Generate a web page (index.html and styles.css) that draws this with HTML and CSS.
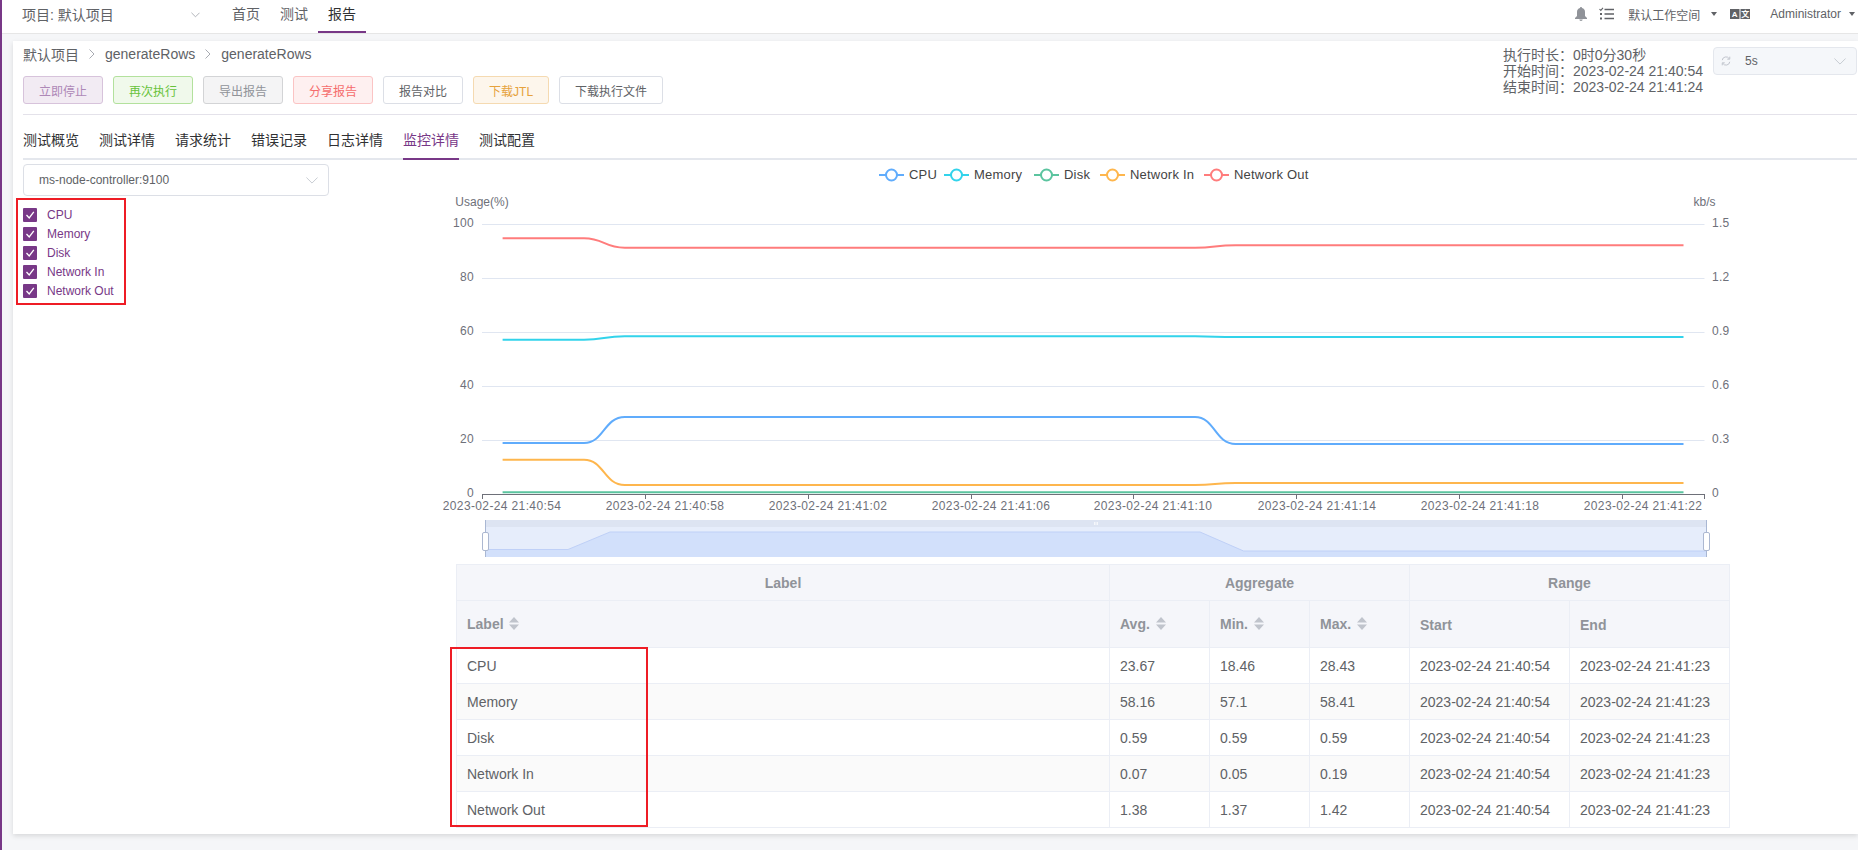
FILE: index.html
```html
<!DOCTYPE html>
<html lang="zh">
<head>
<meta charset="utf-8">
<title>Report</title>
<link rel="stylesheet" href="styles.css">
</head>
<body>
<div class="app">
  <header class="topbar">
    <div class="project"><span>项目: 默认项目</span>
      <svg class="chev" viewBox="0 0 10 6" width="9" height="6"><path d="M.5.5 5 5 9.500.5" fill="none" stroke="#a8abb2"/></svg>
    </div>
    <nav class="nav">
      <a class="nav-item">首页</a><a class="nav-item">测试</a><a class="nav-item active">报告</a>
    </nav>
    <div class="top-right">
      <svg class="i-bell" viewBox="0 0 12 14" width="12" height="14"><path d="M6 0c.7 0 1 .5 1 1 2 .5 3 2 3 4v4l2 2v1H0v-1l2-2V5c0-2 1-3.500 3-4 0-.5.3-1 1-1zM4.300 12.600h3.400C7.600 13.500 7 14 6 14s-1.600-.5-1.700-1.400z" fill="#909399"/></svg>
      <svg class="i-list" viewBox="0 0 15 14" width="15" height="14"><path d="M5.500 2.500H15M5.500 7H15M5.500 11.500H15" stroke="#606266" stroke-width="1.400"/><path d="M.5 2 1.800 3.400 4 .8" fill="none" stroke="#606266" stroke-width="1.100"/><rect x="1" y="6" width="2" height="2" fill="#606266"/><rect x="1" y="10.500" width="2" height="2" fill="#606266"/></svg>
      <span class="ws">默认工作空间</span><i class="caret"></i>
      <svg class="i-lang" viewBox="0 0 20 10" width="20" height="10"><rect width="9.500" height="10" fill="#606266"/><rect x="10.500" width="9.500" height="10" fill="#606266"/><text x="4.700" y="8" text-anchor="middle" class="lang-txt">A</text><text x="15.200" y="8" text-anchor="middle" class="lang-txt">文</text></svg>
      <span class="user">Administrator</span><i class="caret"></i>
    </div>
  </header>

  <main class="card">
    <section class="head">
      <div class="head-left">
        <div class="crumbs">
          <span>默认项目</span>
          <svg class="sep" viewBox="0 0 6 10" width="6" height="10"><path d="M.5.5 5 5 .5 9.500" fill="none" stroke="#a8abb2"/></svg>
          <span>generateRows</span>
          <svg class="sep" viewBox="0 0 6 10" width="6" height="10"><path d="M.5.5 5 5 .5 9.500" fill="none" stroke="#a8abb2"/></svg>
          <span>generateRows</span>
        </div>
        <div class="actions">
          <button class="btn b-purple">立即停止</button>
          <button class="btn b-green">再次执行</button>
          <button class="btn b-grey">导出报告</button>
          <button class="btn b-red">分享报告</button>
          <button class="btn">报告对比</button>
          <button class="btn b-orange">下载JTL</button>
          <button class="btn">下载执行文件</button>
        </div>
      </div>
      <div class="head-right">
        <div class="times">
          <div>执行时长：0时0分30秒</div>
          <div>开始时间：2023-02-24 21:40:54</div>
          <div>结束时间：2023-02-24 21:41:24</div>
        </div>
        <div class="refresh">
          <svg viewBox="0 0 12 12" width="10" height="10"><path d="M1.500 5A4.500 4.500 0 0 1 9.800 3.200M10.500 7A4.500 4.500 0 0 1 2.200 8.800" fill="none" stroke="#c0c4cc" stroke-width="1.200"/><path d="M10.500.8v3H7.500M1.500 11.200v-3h3" fill="none" stroke="#c0c4cc" stroke-width="1.200"/></svg>
          <span class="refresh-val">5s</span>
          <svg class="refresh-chev" viewBox="0 0 14 8" width="12" height="7"><path d="M.5.5 7 7 13.500.5" fill="none" stroke="#c0c4cc"/></svg>
        </div>
      </div>
    </section>

    <nav class="tabs">
      <a class="tab">测试概览</a><a class="tab">测试详情</a><a class="tab">请求统计</a><a class="tab">错误记录</a><a class="tab">日志详情</a><a class="tab active">监控详情</a><a class="tab">测试配置</a>
    </nav>

    <section class="monitor">
      <aside class="side">
        <div class="select">
          <span>ms-node-controller:9100</span>
          <svg viewBox="0 0 14 8" width="12" height="7"><path d="M.5.5 7 7 13.500.5" fill="none" stroke="#c0c4cc"/></svg>
        </div>
        <ul class="checks">
          <li class="check"><svg class="box" viewBox="0 0 14 14" width="14" height="14"><rect width="14" height="14" rx="1" fill="#783887"/><path d="M3.500 7 6.200 10 10.800 3.800" fill="none" stroke="#fff" stroke-width="1.300"/></svg>CPU</li>
          <li class="check"><svg class="box" viewBox="0 0 14 14" width="14" height="14"><rect width="14" height="14" rx="1" fill="#783887"/><path d="M3.500 7 6.200 10 10.800 3.800" fill="none" stroke="#fff" stroke-width="1.300"/></svg>Memory</li>
          <li class="check"><svg class="box" viewBox="0 0 14 14" width="14" height="14"><rect width="14" height="14" rx="1" fill="#783887"/><path d="M3.500 7 6.200 10 10.800 3.800" fill="none" stroke="#fff" stroke-width="1.300"/></svg>Disk</li>
          <li class="check"><svg class="box" viewBox="0 0 14 14" width="14" height="14"><rect width="14" height="14" rx="1" fill="#783887"/><path d="M3.500 7 6.200 10 10.800 3.800" fill="none" stroke="#fff" stroke-width="1.300"/></svg>Network In</li>
          <li class="check"><svg class="box" viewBox="0 0 14 14" width="14" height="14"><rect width="14" height="14" rx="1" fill="#783887"/><path d="M3.500 7 6.200 10 10.800 3.800" fill="none" stroke="#fff" stroke-width="1.300"/></svg>Network Out</li>
        </ul>
        <div class="mark mark-checks"></div>
      </aside>

      <div class="content">
        <svg class="chart" viewBox="440 165 1320 395" width="1320" height="395">
          <g class="legend">
            <g fill="#fff" stroke-width="2">
              <g stroke="#60acfc"><path d="M879 175H904"/><circle cx="891.500" cy="175" r="5.500"/></g>
              <g stroke="#32d3eb"><path d="M944 175H969"/><circle cx="956.500" cy="175" r="5.500"/></g>
              <g stroke="#5bc49f"><path d="M1034 175H1059"/><circle cx="1046.500" cy="175" r="5.500"/></g>
              <g stroke="#feb64d"><path d="M1100 175H1125"/><circle cx="1112.500" cy="175" r="5.500"/></g>
              <g stroke="#ff7c7c"><path d="M1204 175H1229"/><circle cx="1216.500" cy="175" r="5.500"/></g>
            </g>
            <text x="909" y="179">CPU</text>
            <text x="974" y="179">Memory</text>
            <text x="1064" y="179">Disk</text>
            <text x="1130" y="179">Network In</text>
            <text x="1234" y="179">Network Out</text>
          </g>
          <g stroke="#e0e6f1">
            <path d="M482 224.500H1704.500M482 278.500H1704.500M482 332.500H1704.500M482 386.500H1704.500M482 440.500H1704.500"/>
          </g>
          <path d="M482 494.500H1704.500M482.500 494v5M645.500 494v5M808.500 494v5M971.500 494v5M1133.500 494v5M1296.500 494v5M1459.500 494v5M1622.500 494v5M1704.500 494v5" stroke="#6e7079"/>
          <g class="axis">
            <text x="482" y="206" text-anchor="middle">Usage(%)</text>
            <text x="1704.500" y="206" text-anchor="middle">kb/s</text>
            <g text-anchor="end" class="ticks">
              <text x="474" y="227">100</text><text x="474" y="281">80</text><text x="474" y="335">60</text><text x="474" y="389">40</text><text x="474" y="443">20</text><text x="474" y="497">0</text>
            </g>
            <g class="ticks">
              <text x="1712" y="227">1.5</text><text x="1712" y="281">1.2</text><text x="1712" y="335">0.9</text><text x="1712" y="389">0.6</text><text x="1712" y="443">0.3</text><text x="1712" y="497">0</text>
            </g>
            <g text-anchor="middle" class="dates">
              <text x="502" y="510">2023-02-24 21:40:54</text><text x="665" y="510">2023-02-24 21:40:58</text><text x="828" y="510">2023-02-24 21:41:02</text><text x="991" y="510">2023-02-24 21:41:06</text><text x="1153" y="510">2023-02-24 21:41:10</text><text x="1317" y="510">2023-02-24 21:41:14</text><text x="1480" y="510">2023-02-24 21:41:18</text><text x="1643" y="510">2023-02-24 21:41:22</text>
            </g>
          </g>
          <g fill="none" stroke-width="2">
            <path stroke="#ff7c7c" d="M502.600 238.300H584C604 238.300 604 247.700 624.800 247.700H1195C1215 247.700 1215 245.300 1235.600 245.300H1683.500"/>
            <path stroke="#32d3eb" d="M502.600 339.700H584C604 339.700 604 336.300 624.800 336.300H1195C1215 336.300 1215 337 1235.600 337H1683.500"/>
            <path stroke="#60acfc" d="M502.600 443H584C604 443 604 417 624.800 417H1195C1215 417 1215 444 1235.600 444H1683.500"/>
            <path stroke="#feb64d" d="M502.600 459.700H584C604 459.700 604 485 624.800 485H1195C1215 485 1215 483 1235.600 483H1683.500"/>
            <path stroke="#5bc49f" d="M502.600 492.300H1683.500"/>
          </g>
          <rect x="485" y="520" width="1222" height="37" fill="#e6edfb"/>
          <rect x="485" y="520" width="1222" height="7" fill="#dde4f2"/>
          <path d="M485 549.500H568L610 532H1200L1243.600 551H1707V557H485Z" fill="#d2e0fb"/>
          <path d="M485 549.500H568L610 532H1200L1243.600 551H1707" fill="none" stroke="#bfd0f7"/>
          <path d="M485.500 520V557M1706.500 520V557" stroke="#a9b7d3"/>
          <path d="M1094.500 522v3M1096 522v3M1097.500 522v3" stroke="#fff" stroke-width=".7"/>
          <rect x="482.500" y="532.500" width="6" height="18" rx="1.500" fill="#fff" stroke="#acb8d1"/>
          <rect x="1703.500" y="532.500" width="6" height="18" rx="1.500" fill="#fff" stroke="#acb8d1"/>
        </svg>

        <div class="table-wrap">
          <table class="data">
            <colgroup><col class="c-label"><col class="c-num"><col class="c-num"><col class="c-num"><col class="c-time"><col class="c-time"></colgroup>
            <thead>
              <tr class="group">
                <th>Label</th><th colspan="3">Aggregate</th><th colspan="2">Range</th>
              </tr>
              <tr class="cols">
                <th>Label <svg class="sort" viewBox="0 0 10 13" width="10" height="13"><path d="M5 0l5 5.500H0zM5 13l5-5.500H0z" fill="#c0c4cc"/></svg></th>
                <th>Avg. <svg class="sort" viewBox="0 0 10 13" width="10" height="13"><path d="M5 0l5 5.500H0zM5 13l5-5.500H0z" fill="#c0c4cc"/></svg></th>
                <th>Min. <svg class="sort" viewBox="0 0 10 13" width="10" height="13"><path d="M5 0l5 5.500H0zM5 13l5-5.500H0z" fill="#c0c4cc"/></svg></th>
                <th>Max. <svg class="sort" viewBox="0 0 10 13" width="10" height="13"><path d="M5 0l5 5.500H0zM5 13l5-5.500H0z" fill="#c0c4cc"/></svg></th>
                <th class="plain">Start</th><th class="plain">End</th>
              </tr>
            </thead>
            <tbody>
              <tr><td>CPU</td><td>23.67</td><td>18.46</td><td>28.43</td><td>2023-02-24 21:40:54</td><td>2023-02-24 21:41:23</td></tr>
              <tr><td>Memory</td><td>58.16</td><td>57.1</td><td>58.41</td><td>2023-02-24 21:40:54</td><td>2023-02-24 21:41:23</td></tr>
              <tr><td>Disk</td><td>0.59</td><td>0.59</td><td>0.59</td><td>2023-02-24 21:40:54</td><td>2023-02-24 21:41:23</td></tr>
              <tr><td>Network In</td><td>0.07</td><td>0.05</td><td>0.19</td><td>2023-02-24 21:40:54</td><td>2023-02-24 21:41:23</td></tr>
              <tr><td>Network Out</td><td>1.38</td><td>1.37</td><td>1.42</td><td>2023-02-24 21:40:54</td><td>2023-02-24 21:41:23</td></tr>
            </tbody>
          </table>
          <div class="mark mark-table"></div>
        </div>
      </div>
    </section>
  </main>
</div>
</body>
</html>
```

FILE: styles.css
```css
* { box-sizing: border-box; }
html, body { margin: 0; padding: 0; }
body {
  width: 1858px;
  height: 850px;
  overflow: hidden;
  font-family: "Liberation Sans", "Noto Sans CJK SC", sans-serif;
  color: #606266;
  background: #f5f6f8;
}
.app {
  height: 850px;
  border-left: 2px solid #783887;
  display: flex;
  flex-direction: column;
}

/* top bar */
.topbar {
  height: 34px;
  flex: none;
  display: flex;
  align-items: stretch;
  background: #fff;
  border-bottom: 1px solid #e6e6e6;
}
.project {
  width: 220px;
  padding: 0 22px 0 20px;
  display: flex;
  align-items: center;
  justify-content: space-between;
  font-size: 14px;
  line-height: 30px;
  height: 30px;
  color: #606266;
}
.nav { display: flex; height: 33px; }
.nav-item {
  width: 48px;
  text-align: center;
  font-size: 14px;
  line-height: 28px;
  color: #606266;
}
.nav-item.active {
  color: #303133;
  border-bottom: 2px solid #783887;
}
.top-right {
  margin-left: auto;
  display: flex;
  align-items: center;
  height: 28px;
  padding-right: 3px;
  font-size: 12px;
  color: #606266;
}
.i-list { margin-left: 12px; }
.ws { margin-left: 14px; }
.caret {
  margin-left: 11px;
  width: 0;
  height: 0;
  border-left: 3.500px solid transparent;
  border-right: 3.500px solid transparent;
  border-top: 4px solid #606266;
}
.i-lang { margin-left: 13px; }
.lang-txt { font-size: 8px; font-weight: 700; fill: #fff; }
.user { margin-left: 20px; }
.user + .caret { margin-left: 8px; }

/* card */
.card {
  margin: 7px 0 0 11px;
  height: 793px;
  background: #fff;
  padding-left: 10px;
  box-shadow: 0 2px 5px rgba(0, 0, 0, .12);
  display: flex;
  flex-direction: column;
}
.head {
  height: 74px;
  flex: none;
  display: flex;
  justify-content: space-between;
  border-bottom: 1px solid #e4e2ea;
  margin-right: 1px;
}
.crumbs {
  display: flex;
  align-items: center;
  height: 26px;
  font-size: 14px;
  color: #606266;
}
.sep { margin: 0 10px 0 10px; }
.actions { display: flex; gap: 10px; margin-top: 9px; }
.btn {
  height: 28px;
  padding: 0 15px;
  font: 12px "Liberation Sans", "Noto Sans CJK SC", sans-serif;
  color: #606266;
  background: #fff;
  border: 1px solid #dcdfe6;
  border-radius: 3px;
}
.b-purple { color: #ae88b7; background: #f2ebf3; border-color: #d7c3db; }
.b-green { color: #67c23a; background: #f0f9eb; border-color: #b3e19d; }
.b-grey { color: #909399; background: #f4f4f5; border-color: #d3d4d6; }
.b-red { color: #f56c6c; background: #fef0f0; border-color: #fbc4c4; }
.b-orange { color: #e6a23c; background: #fdf6ec; border-color: #f5dab1; }
.head-right { display: flex; padding-top: 6px; }
.times { font-size: 14px; line-height: 16px; color: #606266; }
.refresh {
  margin-left: 10px;
  width: 144px;
  height: 28px;
  padding: 0 10px 0 7px;
  display: flex;
  align-items: center;
  background: #f5f7fa;
  border: 1px solid #e4e7ed;
  border-radius: 4px;
  font-size: 12px;
  color: #606266;
}
.refresh-val { margin-left: 14px; }
.refresh-chev { margin-left: auto; }

/* tabs */
.tabs {
  height: 45px;
  flex: none;
  display: flex;
  gap: 20px;
  border-bottom: 2px solid #e4e7ed;
  margin-right: 1px;
}
.tab {
  width: 56px;
  height: 45px;
  line-height: 50px;
  font-size: 14px;
  white-space: nowrap;
  color: #303133;
}
.tab.active { color: #783887; border-bottom: 2px solid #783887; }

/* monitor */
.monitor { display: flex; flex: 1; min-height: 0; }
.side { position: relative; width: 417px; flex: none; padding-top: 4px; }
.select {
  width: 306px;
  height: 32px;
  padding: 0 10px 0 15px;
  display: flex;
  align-items: center;
  justify-content: space-between;
  border: 1px solid #dcdfe6;
  border-radius: 4px;
  font-size: 12px;
  color: #606266;
}
.checks { list-style: none; margin: 9px 0 0; padding: 0; }
.check {
  display: flex;
  align-items: center;
  height: 19px;
  font-size: 12px;
  color: #783887;
}
.box { margin-right: 10px; }
.mark { position: absolute; border: 2px solid #ee1c25; }
.mark-checks { left: -7px; top: 38px; width: 110px; height: 107px; }
.content { padding-top: 5px; }
.chart { display: block; }
.chart text { font-size: 12px; fill: #6e7079; }
.chart .legend text { fill: #444; font-size: 13px; letter-spacing: .2px; }
.chart .dates text { letter-spacing: .37px; }
.chart .ticks text { letter-spacing: .3px; }
.table-wrap { position: relative; margin: 4px 0 0 16px; width: 1273px; }
.data {
  width: 1273px;
  table-layout: fixed;
  border-collapse: collapse;
  font-size: 14px;
  color: #606266;
}
.c-label { width: 653px; }
.c-num { width: 100px; }
.c-time { width: 160px; }
.data th, .data td {
  border: 1px solid #ebeef5;
  padding: 0 10px;
  text-align: left;
  white-space: nowrap;
  overflow: hidden;
}
.data th { background: #f5f6fa; color: #909399; font-weight: 700; }
.group th { height: 36px; text-align: center; }
.cols th { height: 47px; }
.cols th.plain { padding-top: 2px; }
.sort { vertical-align: -1px; margin-left: 2px; }
.data td { height: 36px; }
.data tbody tr:nth-child(even) td { background: #fafafa; }
.mark-table { left: -6px; top: 83px; width: 198px; height: 180px; }
```
